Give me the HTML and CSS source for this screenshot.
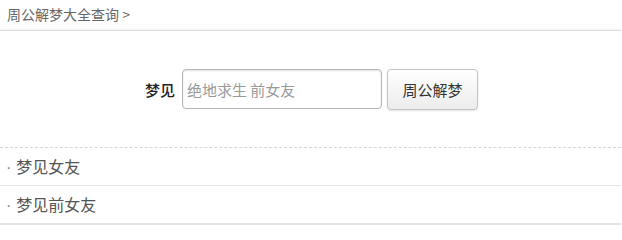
FILE: index.html
```html
<!DOCTYPE html>
<html lang="zh-CN">
<head>
<meta charset="utf-8">
<link rel="stylesheet" href="styles.css">
</head>
<body>
<div class="page">
  <div class="crumb">周公解梦大全查询 &gt;</div>
  <div class="search">
    <span class="label">梦见</span>
    <input class="field" type="text" placeholder="绝地求生 前女友">
    <button class="btn" type="button">周公解梦</button>
  </div>
  <ul class="list">
    <li class="item"><span class="dot">·</span>梦见女友</li>
    <li class="item"><span class="dot">·</span>梦见前女友</li>
  </ul>
</div>
</body>
</html>
```

FILE: styles.css
```css
html, body {
  margin: 0;
  padding: 0;
  background: #fff;
}
body {
  font-family: "Noto Sans CJK SC", "Liberation Sans", sans-serif;
  color: #555;
}
.page {
  width: 621px;
}
.crumb {
  height: 30px;
  line-height: 28px;
  padding-left: 7px;
  font-size: 14px;
  color: #666;
  border-bottom: 1px solid #dcdcdc;
  box-shadow: 0 -3px 3px -2px #f2f2f2 inset;
}
.search {
  display: flex;
  align-items: center;
  justify-content: center;
  gap: 6px;
  height: 116px;
  padding-left: 2px;
  border-bottom: 1px dashed #d6d6d6;
}
.label {
  font-size: 15px;
  font-weight: 500;
  color: #222;
  margin-right: 1px;
}
.field {
  box-sizing: border-box;
  width: 200px;
  height: 40px;
  margin: 0;
  padding: 0 4px;
  font-family: inherit;
  font-size: 15px;
  color: #333;
  border: 1px solid #b5b5b5;
  border-radius: 4px;
  box-shadow: inset 0 1px 2px rgba(0,0,0,0.12);
  outline: none;
}
.field::placeholder {
  color: #9a9a9a;
}
.btn {
  box-sizing: border-box;
  width: 91px;
  height: 41px;
  margin: 0 0 0 -1px;
  font-family: inherit;
  font-size: 15px;
  color: #333;
  border: 1px solid #c4c4c4;
  border-radius: 4px;
  background: linear-gradient(#ffffff, #ececec);
  box-shadow: 0 1px 2px rgba(0,0,0,0.12);
}
.list {
  list-style: none;
  margin: 0;
  padding: 0;
  border-bottom: 2px solid #e4e4e4;
}
.item {
  height: 37px;
  line-height: 37px;
  padding-left: 6px;
  font-size: 16px;
  color: #555;
}
.dot {
  font-family: "Liberation Sans", sans-serif;
  color: #888;
  margin-right: 5px;
}
.item + .item {
  border-top: 1px solid #e6e6e6;
}
```
